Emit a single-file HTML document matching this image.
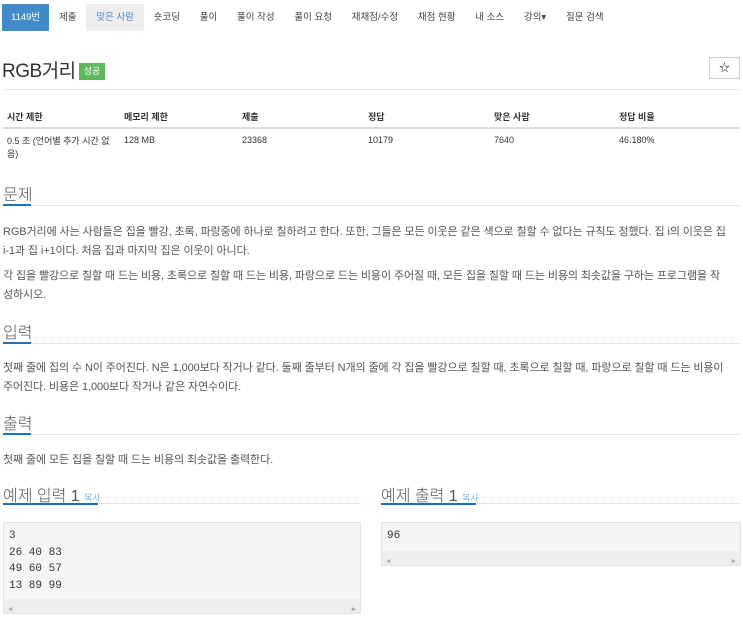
<!DOCTYPE html>
<html><head><meta charset="utf-8"><style>
body{margin:0;width:743px;height:622px;background:#fff;font-family:"Liberation Sans","Noto Sans CJK KR",sans-serif;color:#555;position:relative;overflow:hidden}
.a{position:absolute;white-space:nowrap}
.nav{position:absolute;top:4px;left:2px;height:27px;display:flex;font-size:9.5px}
.nav div{padding:0 9.9px;line-height:27px;color:#444}
.nav .on{background:#428bca;color:#fff;padding:0 9px}
.nav .g{background:#eee;color:#428bca}
.t{font-size:9px;color:#333}
.h{font-size:16px;color:#555;font-weight:300}
.ul{position:absolute;height:0;border-bottom:1px dotted #ccc}
.bl{position:absolute;height:2px;background:#1a73b8}
p{position:absolute;margin:0;font-size:11px;line-height:19px;color:#555;left:3px;white-space:nowrap;letter-spacing:-0.1px}
.pre{position:absolute;background:#f5f5f7;border:1px solid #e3e3e3;font-family:"Liberation Mono",monospace;font-size:11px;color:#333;line-height:16.5px}
.sb{position:absolute;left:0;right:0;bottom:0;height:14px;background:#eee;font-size:7px;color:#aaa}
</style></head><body>
<div class="nav"><div class="on">1149번</div><div>제출</div><div class="g">맞은 사람</div><div>숏코딩</div><div>풀이</div><div>풀이 작성</div><div>풀이 요청</div><div>재채점/수정</div><div>채점 현황</div><div>내 소스</div><div>강의▾</div><div>질문 검색</div></div>
<div class="a" style="left:2px;top:56px;font-size:19px;color:#333;letter-spacing:-0.5px">RGB거리</div>
<div class="a" style="left:79px;top:63px;width:26px;height:17px;background:#5cb85c;color:#fff;font-size:9px;line-height:17px;text-align:center">성공</div>
<div class="a" style="left:709px;top:57px;width:29px;height:20px;border:1px solid #ccc;border-radius:2px;font-size:11px;text-align:center;line-height:20px;color:#333">☆</div>
<div class="a" style="left:3px;top:89px;width:737px;border-top:1px solid #e5e5e5"></div>
<div class="a t" style="left:7px;top:110px;font-weight:bold">시간 제한</div>
<div class="a t" style="left:124px;top:110px;font-weight:bold">메모리 제한</div>
<div class="a t" style="left:242px;top:110px;font-weight:bold">제출</div>
<div class="a t" style="left:368px;top:110px;font-weight:bold">정답</div>
<div class="a t" style="left:494px;top:110px;font-weight:bold">맞은 사람</div>
<div class="a t" style="left:619px;top:110px;font-weight:bold">정답 비율</div>
<div class="a" style="left:3px;top:127px;width:737px;border-top:2px solid #ddd"></div>
<div class="a t" style="left:7px;top:135px;line-height:13px;white-space:normal;width:112px">0.5 초 (언어별 추가 시간 없음)</div>
<div class="a t" style="left:124px;top:135px">128 MB</div>
<div class="a t" style="left:242px;top:135px">23368</div>
<div class="a t" style="left:368px;top:135px">10179</div>
<div class="a t" style="left:494px;top:135px">7640</div>
<div class="a t" style="left:619px;top:135px">46.180%</div>

<div class="a h" style="left:3px;top:181px">문제</div>
<div class="ul" style="left:3px;top:205px;width:737px"></div><div class="bl" style="left:3px;top:204px;width:28px"></div>
<p style="top:223px">RGB거리에 사는 사람들은 집을 빨강, 초록, 파랑중에 하나로 칠하려고 한다. 또한, 그들은 모든 이웃은 같은 색으로 칠할 수 없다는 규칙도 정했다. 집 i의 이웃은 집<br>i-1과 집 i+1이다. 처음 집과 마지막 집은 이웃이 아니다.</p>
<p style="top:267px">각 집을 빨강으로 칠할 때 드는 비용, 초록으로 칠할 때 드는 비용, 파랑으로 드는 비용이 주어질 때, 모든 집을 칠할 때 드는 비용의 최솟값을 구하는 프로그램을 작<br>성하시오.</p>

<div class="a h" style="left:3px;top:319px">입력</div>
<div class="ul" style="left:3px;top:343px;width:737px"></div><div class="bl" style="left:3px;top:342px;width:28px"></div>
<p style="top:359px">첫째 줄에 집의 수 N이 주어진다. N은 1,000보다 작거나 같다. 둘째 줄부터 N개의 줄에 각 집을 빨강으로 칠할 때, 초록으로 칠할 때, 파랑으로 칠할 때 드는 비용이<br>주어진다. 비용은 1,000보다 작거나 같은 자연수이다.</p>

<div class="a h" style="left:3px;top:410px">출력</div>
<div class="ul" style="left:3px;top:434px;width:737px"></div><div class="bl" style="left:3px;top:433px;width:28px"></div>
<p style="top:451px">첫째 줄에 모든 집을 칠할 때 드는 비용의 최솟값을 출력한다.</p>

<div class="a h" style="left:3px;top:482px">예제 입력 1 <span style="font-size:9px;color:#428bca">복사</span></div>
<div class="ul" style="left:3px;top:503px;width:357px"></div><div class="bl" style="left:3px;top:503px;width:95px"></div>
<div class="a h" style="left:381px;top:482px">예제 출력 1 <span style="font-size:9px;color:#428bca">복사</span></div>
<div class="ul" style="left:381px;top:503px;width:359px"></div><div class="bl" style="left:381px;top:503px;width:95px"></div>

<div class="pre" style="left:3px;top:522px;width:356px;height:90px"><div style="padding:5px 5px">3<br>26 40 83<br>49 60 57<br>13 89 99</div><div class="sb"><span style="position:absolute;left:4px;top:3px">◀</span><span style="position:absolute;right:4px;top:3px">▶</span></div></div>
<div class="pre" style="left:381px;top:522px;width:358px;height:42px"><div style="padding:5px 5px">96</div><div class="sb"><span style="position:absolute;left:4px;top:3px">◀</span><span style="position:absolute;right:4px;top:3px">▶</span></div></div>
</body></html>
